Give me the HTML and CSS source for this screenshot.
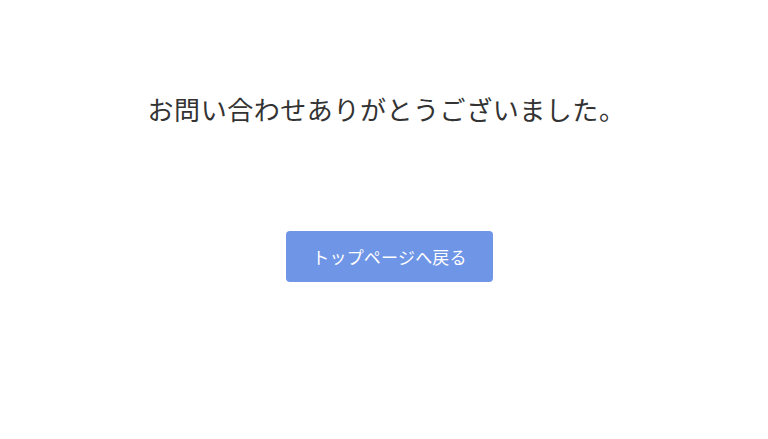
FILE: index.html
```html
<!DOCTYPE html>
<html lang="ja">
<head>
<meta charset="utf-8">
<title>お問い合わせ完了</title>
<link rel="stylesheet" href="styles.css">
</head>
<body>
<main class="thanks">
  <h1 class="thanks-title">お問い合わせありがとうございました。</h1>
  <div class="thanks-actions">
    <a class="btn-back" href="#">トップページへ戻る</a>
  </div>
</main>
</body>
</html>
```

FILE: styles.css
```css
html, body {
  margin: 0;
  padding: 0;
  background: #ffffff;
}
body {
  font-family: "Noto Sans CJK JP", "Noto Sans", sans-serif;
  color: #333333;
}
.thanks {
  display: flex;
  flex-direction: column;
  align-items: center;
  padding-top: 91px;
}
.thanks-title {
  margin: 0 0 0 5px;
  font-size: 26px;
  letter-spacing: 0.55px;
  font-weight: 400;
  line-height: 36px;
  color: #333333;
}
.thanks-actions {
  margin-top: 104px;
  padding-left: 11px;
}
.btn-back {
  display: block;
  width: 207px;
  height: 51px;
  box-sizing: border-box;
  background: #6f95e6;
  color: #ffffff;
  border-radius: 4px;
  text-decoration: none;
  font-size: 17px;
  letter-spacing: 0.2px;
  line-height: 51px;
  text-align: center;
}
```
